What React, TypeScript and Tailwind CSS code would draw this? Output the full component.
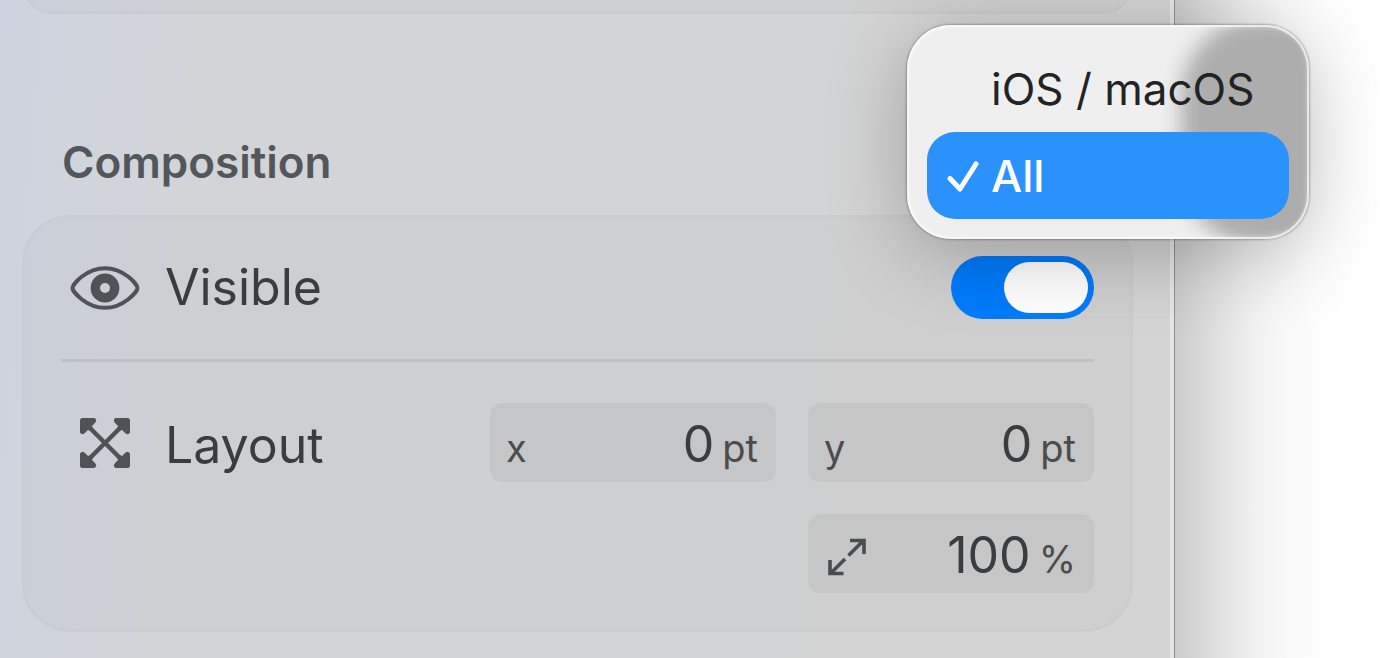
import { useState } from "react";
import type { ReactNode } from "react";

const platforms = ["iOS / macOS", "All"];

function EyeIcon() {
  return (
    <svg viewBox="0 0 70 46" className="w-[70px] h-[46px]" fill="none" aria-hidden="true">
      <path
        d="M2.5 23C2.5 19.5 16 3.2 35 3.2S67.500 19.500 67.500 23 54 42.800 35 42.800 2.500 26.500 2.500 23Z"
        stroke="#505257"
        strokeWidth="4"
        strokeLinejoin="round"
      />
      <circle cx="35" cy="23" r="9.700" stroke="#505257" strokeWidth="9.400" />
    </svg>
  );
}

function ArrowsIcon() {
  return (
    <svg viewBox="0 0 50 50" className="w-[50px] h-[50px]" aria-hidden="true">
      <path d="M8 8 42 42M42 8 8 42" stroke="#505257" strokeWidth="4.500" />
      <g fill="#505257" stroke="#505257" strokeWidth="2" strokeLinejoin="round">
        <path d="M2 1H14Q16 2 14.500 4L10.500 8 12 10 10 12 8 10.500 4 14.500Q2 16 1 14V2Z" />
        <path d="M48 1H36Q34 2 35.500 4L39.500 8 38 10 40 12 42 10.500 46 14.500Q48 16 49 14V2Z" />
        <path d="M2 49H14Q16 48 14.500 46L10.500 42 12 40 10 38 8 39.500 4 35.500Q2 34 1 36V48Z" />
        <path d="M48 49H36Q34 48 35.500 46L39.500 42 38 40 40 38 42 39.500 46 35.500Q48 34 49 36V48Z" />
      </g>
    </svg>
  );
}

function ScaleIcon() {
  return (
    <svg
      viewBox="0 0 38 38"
      className="w-[38px] h-[38px]"
      fill="none"
      stroke="#4b4c4e"
      strokeWidth="3.600"
      aria-hidden="true"
    >
      <path d="M20.500 17.500 35 3M22 2.500H36V16M17 21 3 35M2 22V35.500H15.500" />
    </svg>
  );
}

function CheckIcon() {
  return (
    <svg
      viewBox="0 0 32 32"
      className="w-8 h-8"
      fill="none"
      stroke="currentColor"
      strokeWidth="5"
      strokeLinecap="round"
      strokeLinejoin="round"
      aria-hidden="true"
    >
      <path d="M3 18.500 13 29 29 4" />
    </svg>
  );
}

type FieldProps = {
  name: string;
  label: ReactNode;
  unit: string;
  initial: string;
};

function Field({ name, label, unit, initial }: FieldProps) {
  const [value, setValue] = useState(initial);
  return (
    <label className="flex items-center w-[286px] h-[79px] rounded-xl bg-black/4 pl-4 pr-[18px] pt-1.5 text-[#4b4c4e]">
      <span className="flex items-baseline w-full">
        {typeof label === "string" ? (
          <span className="text-[38px] leading-[60px]">{label}</span>
        ) : (
          <span className="self-center pl-1">{label}</span>
        )}
        <input
          aria-label={name}
          value={value}
          onChange={(e) => setValue(e.target.value)}
          className="flex-1 min-w-0 h-[60px] bg-transparent text-right text-[50px] leading-[60px] text-[#3b3c3e] outline-none mr-2"
        />
        <span className="text-[38px] leading-[60px]">{unit}</span>
      </span>
    </label>
  );
}

function PlatformMenu() {
  const [selected, setSelected] = useState("All");
  return (
    <div
      role="menu"
      className="absolute z-10 top-[25px] -right-[135px] w-[402px] h-[214px] rounded-[44px] bg-[#efefef] shadow-[0_0_2px_1px_rgba(0,0,0,0.25),0_14px_80px_rgba(0,0,0,0.25)]"
    >
      <div className="absolute inset-0 overflow-hidden rounded-[44px]">
        <div className="absolute -inset-y-2 -right-6 w-[152px] rounded-l-[80px] bg-[#adadad] blur-[10px]" />
      </div>
      <div className="absolute inset-0 rounded-[44px] shadow-[inset_0_0_0_2px_rgba(250,250,250,0.7),inset_0_0_6px_rgba(255,255,255,0.7)]" />
      <div className="relative flex flex-col px-5 pt-5">
        {platforms.map((platform) => (
          <button
            key={platform}
            role="menuitemradio"
            aria-checked={platform === selected}
            onClick={() => setSelected(platform)}
            className={
              platform === selected
                ? "flex items-center h-[87px] rounded-[28px] bg-[#2b91fd] text-white font-medium text-[44px] leading-none pl-5"
                : "flex items-center h-[87px] rounded-[28px] text-[#222324] text-[44px] leading-none pl-5"
            }
          >
            <span className="w-[44px] shrink-0">{platform === selected && <CheckIcon />}</span>
            <span className="whitespace-nowrap">{platform}</span>
          </button>
        ))}
      </div>
    </div>
  );
}

export default function App() {
  const [visible, setVisible] = useState(true);
  return (
    <div className="flex min-h-screen overflow-hidden bg-white font-['Inter','Liberation_Sans',sans-serif]">
      <aside className="relative flex-1 border-r border-[#8f8f8f] bg-[linear-gradient(95deg,#cfd3df_0%,#d0d4dc_8%,#d2d4d8_16%,#d3d4d6_35%,#d4d4d4_100%)]">
        <div className="flow-root min-h-screen border-r-4 border-[#e6e6e6] pl-[22px] pr-[37px]">
          <div className="h-[60px] -mt-[46px] rounded-[52px] border-3 border-black/2 bg-black/2" />
          <h2 className="pt-[120px] pl-10 h-[201px] text-[44px] leading-[56px] font-semibold text-[#53565b]">
            Composition
          </h2>
          <section className="rounded-[48px] border-3 border-black/2 bg-black/2 px-9 pb-9">
            <div className="flex items-center h-[141px] pb-0.5">
              <span className="flex justify-center w-[88px]">
                <EyeIcon />
              </span>
              <label htmlFor="visible" className="pl-4 pb-0.5 text-[50px] leading-none text-[#3b3c3e]">
                Visible
              </label>
              <input
                id="visible"
                type="checkbox"
                role="switch"
                checked={visible}
                onChange={(e) => setVisible(e.target.checked)}
                className="ml-auto flex items-center appearance-none w-[143px] h-[63px] rounded-full bg-[#a9a9ab] p-1.5 checked:bg-linear-to-b checked:from-[#0078f8] checked:to-[#007dff] before:block before:w-[84px] before:h-[51px] before:rounded-full before:bg-white checked:before:ml-auto"
              />
            </div>
            <hr className="border-0 h-[3px] bg-black/7" />
            <div className="flex items-start pt-[41px]">
              <div className="flex items-center h-[79px]">
                <span className="flex justify-center w-[88px]">
                  <ArrowsIcon />
                </span>
                <span className="pl-4 pt-1 text-[50px] leading-none text-[#3b3c3e]">Layout</span>
              </div>
              <div className="ml-auto flex flex-wrap justify-end gap-8 max-w-[604px]">
                <Field name="X position" label="x" unit="pt" initial="0" />
                <Field name="Y position" label="y" unit="pt" initial="0" />
                <Field name="Scale" label={<ScaleIcon />} unit="%" initial="100" />
              </div>
            </div>
          </section>
        </div>
        <PlatformMenu />
      </aside>
      <main className="w-[225px] shrink-0 bg-[linear-gradient(90deg,#cbcbcb_0%,#dbdbdb_14%,#efefef_33%,#f8f8f8_48%,#fdfdfd_62%,#ffffff_80%)]" />
    </div>
  );
}
